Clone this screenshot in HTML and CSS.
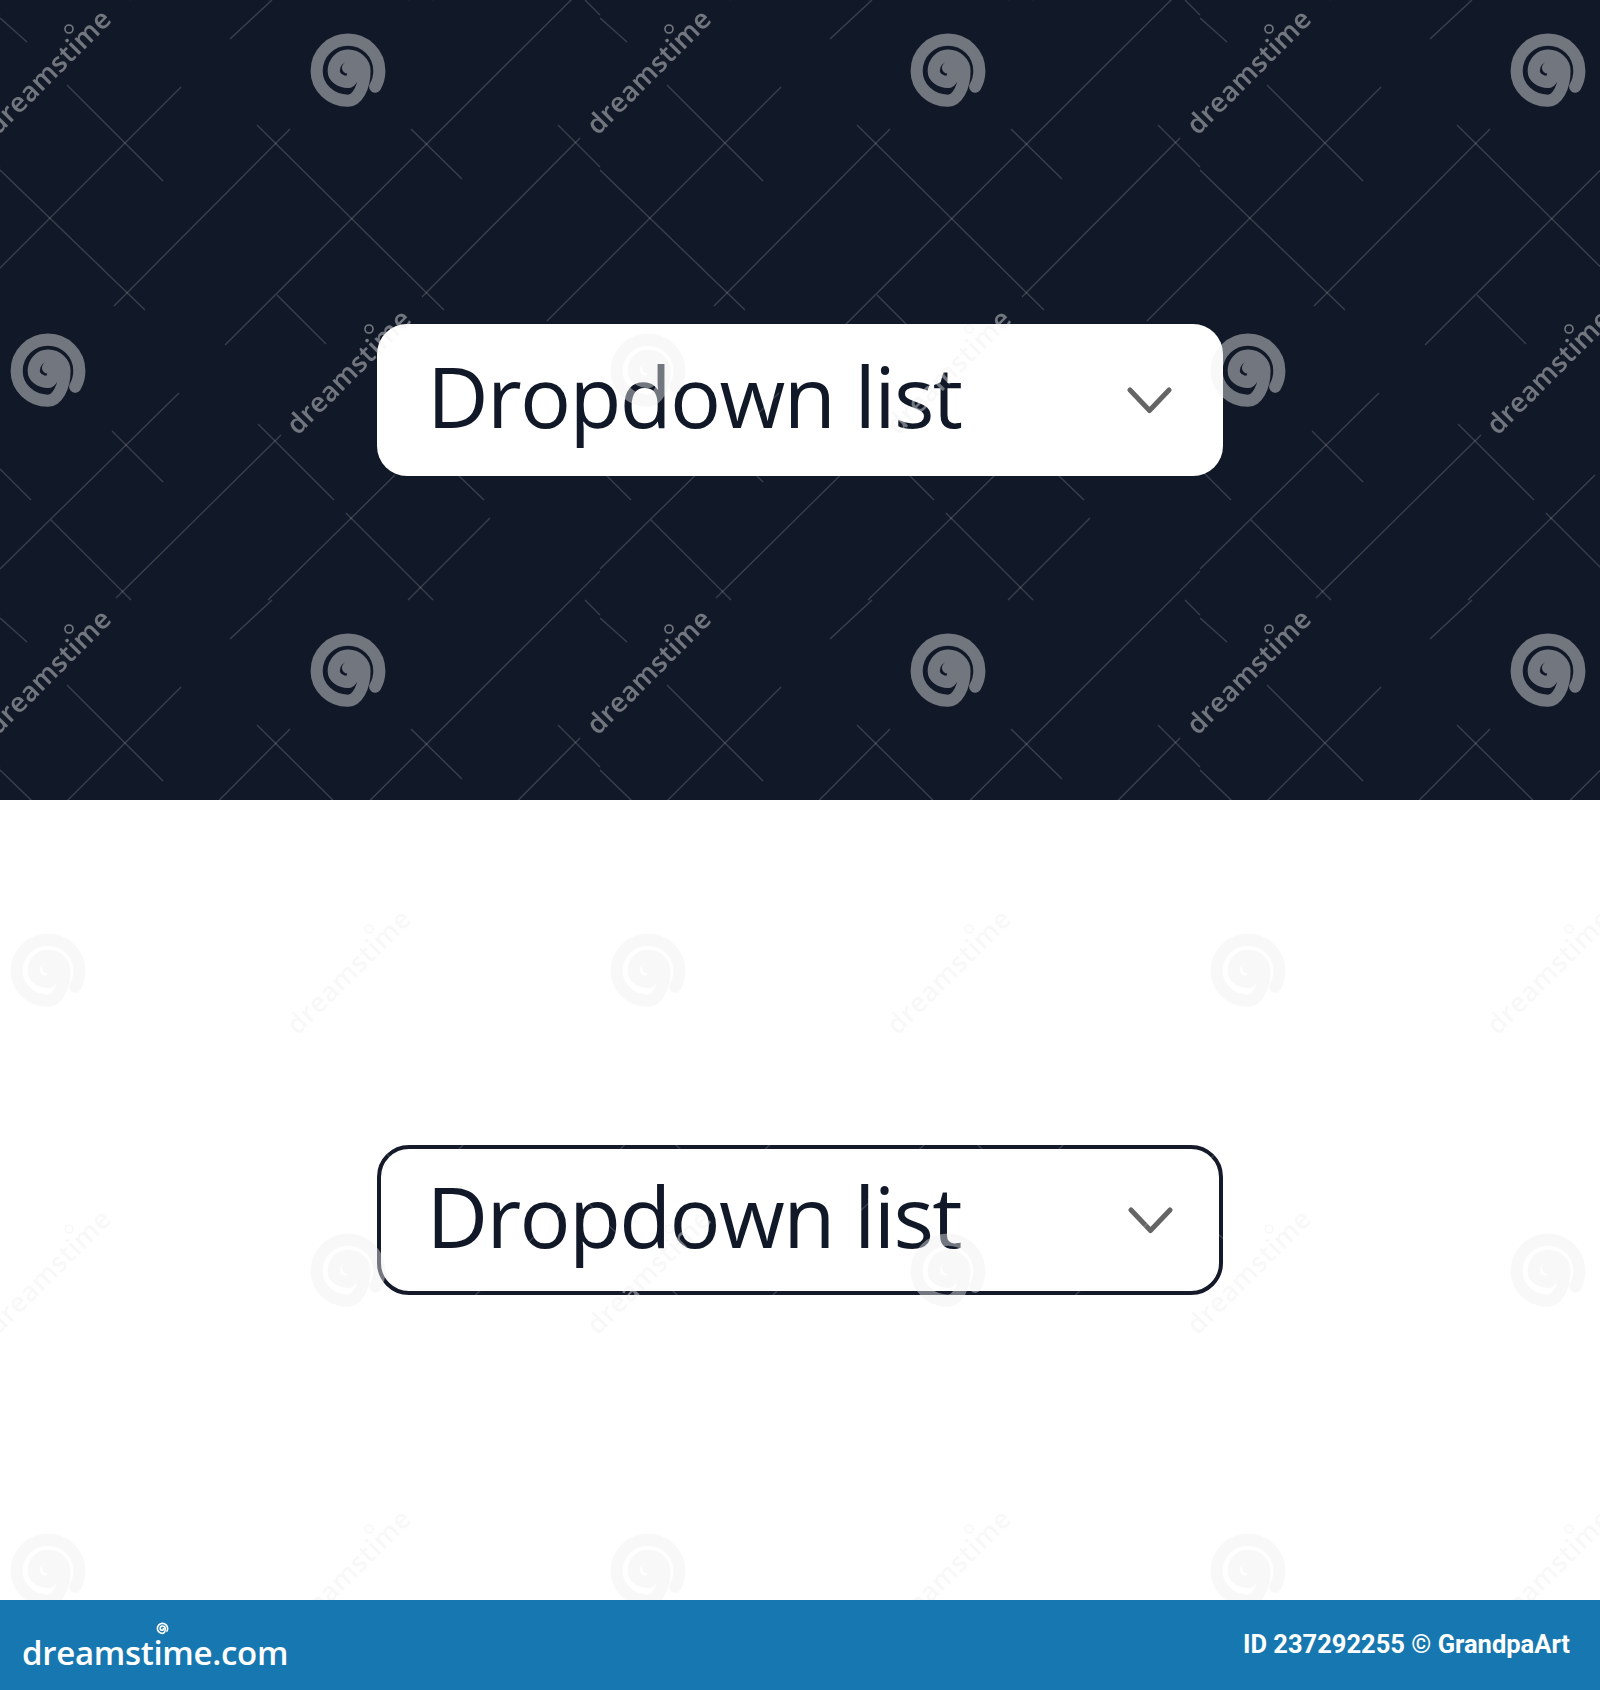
FILE: index.html
```html
<!DOCTYPE html>
<html lang="en">
<head>
<meta charset="UTF-8">
<meta name="viewport" content="width=device-width, initial-scale=1.0">
<title>Dropdown list</title>
<link rel="stylesheet" href="styles.css">
</head>
<body>

<div class="page">
    <section class="panel panel-dark">
        <div class="dropdown dropdown-filled">
            <span class="dropdown-label">Dropdown list</span>
            <svg class="chevron" viewBox="0 0 45 27" width="45" height="27">
                <polyline points="3,3 22.5,23.5 42,3" />
            </svg>
        </div>
    </section>

    <section class="panel panel-light">
        <div class="dropdown dropdown-outline">
            <span class="dropdown-label">Dropdown list</span>
            <svg class="chevron" viewBox="0 0 45 27" width="45" height="27">
                <polyline points="3,3 22.5,23.5 42,3" />
            </svg>
        </div>
    </section>

    <!-- stock watermark laid over both panels -->
    <svg class="watermark" width="1600" height="1600" viewBox="0 0 1600 1600">
        <defs>
            <path id="wm-swirl" d="M 24.7 14.25 A 28.5 28.5 0 0 0 28.5 0 A 28.5 28.5 0 0 0 0 -28.5 A 28.5 28.5 0 0 0 -28.5 0 A 28.5 27 0 0 0 0 27 A 15 27 0 0 0 15 0 A 15 14 0 0 0 0 -14 A 13 14 0 0 0 -13 0 A 13 10 0 0 0 0 10 A 5 10 0 0 0 5 0 A 5 3 0 0 0 0 -3" />
            <g id="wm-tile">
                <text class="wm-word" x="150" y="150" transform="rotate(-45 150 150)">dreamstime</text>
                <text class="wm-word" x="450" y="450" transform="rotate(-45 450 450)">dreamstime</text>
                <circle class="wm-dot" cx="171" cy="108" r="4" />
                <circle class="wm-dot" cx="471" cy="408" r="4" />
                <use class="wm-spiral" href="#wm-swirl" transform="translate(450 150) scale(1.1)" />
                <use class="wm-spiral" href="#wm-swirl" transform="translate(150 450) scale(1.1)" />
            </g>
            <g id="wm-net" class="wm-net">
                <line x1="0" y1="18" x2="27" y2="42" />
                <line x1="67" y1="85" x2="163" y2="181" />
                <line x1="181" y1="87" x2="0" y2="268" />
                <line x1="0" y1="170" x2="145" y2="310" />
                <line x1="114" y1="306" x2="290" y2="129" />
                <line x1="257" y1="125" x2="444" y2="310" />
                <line x1="225" y1="345" x2="571" y2="0" />
                <line x1="277" y1="295" x2="326" y2="344" />
                <line x1="411" y1="129" x2="462" y2="179" />
                <line x1="558" y1="125" x2="600" y2="167" />
                <line x1="422" y1="297" x2="580" y2="138" />
                <line x1="547" y1="321" x2="600" y2="268" />
                <line x1="585" y1="0" x2="600" y2="15" />
                <line x1="230" y1="39" x2="272" y2="0" />
                <line x1="0" y1="569" x2="179" y2="393" />
                <line x1="112" y1="431" x2="163" y2="482" />
                <line x1="0" y1="469" x2="31" y2="500" />
                <line x1="51" y1="520" x2="131" y2="600" />
                <line x1="116" y1="598" x2="281" y2="435" />
                <line x1="258" y1="424" x2="334" y2="500" />
                <line x1="268" y1="600" x2="395" y2="475" />
                <line x1="346" y1="513" x2="433" y2="600" />
                <line x1="408" y1="600" x2="490" y2="518" />
                <line x1="458" y1="475" x2="484" y2="500" />
                <line x1="571" y1="600" x2="600" y2="571" />
            </g>
            <pattern id="wm-light" patternUnits="userSpaceOnUse" x="-102" y="-79" width="600" height="600">
                <use href="#wm-tile" fill="rgba(255,255,255,0.42)" stroke="rgba(255,255,255,0.42)" />
                <g stroke="rgba(255,255,255,0.17)">
                    <use href="#wm-net" transform="translate(102 79)" />
                    <use href="#wm-net" transform="translate(-498 79)" />
                    <use href="#wm-net" transform="translate(102 -521)" />
                    <use href="#wm-net" transform="translate(-498 -521)" />
                </g>
            </pattern>
            <pattern id="wm-shade" patternUnits="userSpaceOnUse" x="-102" y="-79" width="600" height="600">
                <use href="#wm-tile" fill="rgba(17,24,39,0.032)" stroke="rgba(17,24,39,0.032)" />
            </pattern>
        </defs>
        <rect width="1600" height="1600" fill="url(#wm-light)" />
        <rect width="1600" height="1600" fill="url(#wm-shade)" />
    </svg>

    <footer class="credit-bar">
        <span class="brand">dreamstime.com
            <svg class="brand-mark" viewBox="-36 -36 72 72" width="13" height="13">
                <path d="M 24.7 14.25 A 28.5 28.5 0 0 0 28.5 0 A 28.5 28.5 0 0 0 0 -28.5 A 28.5 28.5 0 0 0 -28.5 0 A 28.5 27 0 0 0 0 27 A 15 27 0 0 0 15 0 A 15 14 0 0 0 0 -14 A 13 14 0 0 0 -13 0 A 13 10 0 0 0 0 10 A 5 10 0 0 0 5 0" />
            </svg>
        </span>
        <span class="credit">ID 237292255 © GrandpaArt</span>
    </footer>
</div>

</body>
</html>
```

FILE: styles.css
```css
html, body {
    margin: 0;
    padding: 0;
}
body {
    background-color: #fff;
    font-family: "Open Sans", "Noto Sans", sans-serif;
    overflow: hidden;
}
.page {
    position: relative;
    width: 1600px;
    height: 1690px;
}
.panel {
    height: 800px;
    display: flex;
    align-items: center;
    justify-content: center;
}
.panel-dark {
    background-color: #111827;
}
.panel-light {
    background-color: #fff;
    box-sizing: border-box;
    padding-top: 40px;
}
.dropdown {
    width: 846px;
    height: 152px;
    box-sizing: border-box;
    padding: 0 51px 0 50px;
    border-radius: 30px;
    display: flex;
    align-items: center;
    justify-content: space-between;
    background-color: #fff;
}
.dropdown-outline {
    height: 150px;
    border: 4.5px solid #141a29;
    border-radius: 32px;
    padding: 0 46.5px 0 45.5px;
}
.dropdown-label {
    font-size: 85px;
    line-height: 1;
    letter-spacing: -1.7px;
    padding-bottom: 9px;
    color: #111827;
}
.chevron {
    display: block;
    fill: none;
    stroke: #656565;
    stroke-width: 5;
    stroke-linecap: round;
    stroke-linejoin: round;
}
.watermark {
    position: absolute;
    top: 0;
    left: 0;
    pointer-events: none;
}
.wm-word {
    font-family: "Open Sans", sans-serif;
    font-size: 27px;
    font-weight: 600;
    letter-spacing: 0.5px;
    text-anchor: middle;
    dominant-baseline: central;
    stroke: none;
}
.wm-dot {
    fill: none;
    stroke-width: 1.6;
}
.wm-spiral {
    fill: none;
    stroke-width: 11;
    stroke-linecap: round;
}
.wm-net line {
    stroke-width: 1.3;
}
.credit-bar {
    height: 90px;
    background-color: #1777b0;
    color: #fff;
    display: flex;
    align-items: center;
    justify-content: space-between;
    padding: 0 30px 0 22px;
}
.brand {
    position: relative;
    padding-top: 14px;
    font-family: "Open Sans", sans-serif;
    font-size: 33px;
    font-weight: 600;
    line-height: 1;
    letter-spacing: -0.3px;
}
.brand-mark {
    position: absolute;
    left: 134px;
    top: 0;
    fill: none;
    stroke: #fff;
    stroke-width: 9;
    stroke-linecap: round;
}
.credit {
    font-family: Roboto, sans-serif;
    font-size: 25.5px;
    font-weight: 700;
    line-height: 1;
}
```
